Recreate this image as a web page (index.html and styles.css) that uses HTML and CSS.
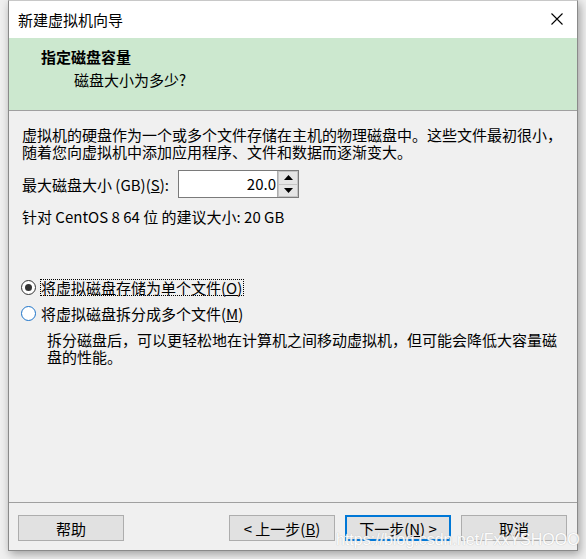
FILE: index.html
```html
<!DOCTYPE html>
<html lang="zh-CN">
<head>
<meta charset="utf-8">
<title>新建虚拟机向导</title>
<link rel="stylesheet" href="styles.css">
</head>
<body>
<div class="window">
  <div class="titlebar">
    <span class="title">新建虚拟机向导</span>
    <svg class="close" width="12" height="12" viewBox="0 0 12 12"><path d="M0.5 0.5 L11.5 11.5 M11.5 0.5 L0.5 11.5" stroke="#000" stroke-width="1.1" fill="none"/></svg>
  </div>
  <div class="header">
    <div class="h-title">指定磁盘容量</div>
    <div class="h-sub">磁盘大小为多少?</div>
  </div>
  <div class="content">
    <p class="para">虚拟机的硬盘作为一个或多个文件存储在主机的物理磁盘中。这些文件最初很小，<br>随着您向虚拟机中添加应用程序、文件和数据而逐渐变大。</p>
    <div class="size-row">
      <span class="label">最大磁盘大小 (GB)(<u>S</u>):</span>
      <div class="spinner">
        <div class="spin-value">20.0</div>
        <div class="spin-btns">
          <div class="spin-btn"><svg width="9" height="5" viewBox="0 0 9 5"><path d="M0 5 L4.5 0 L9 5 Z" fill="#000"/></svg></div>
          <div class="spin-btn"><svg width="9" height="5" viewBox="0 0 9 5"><path d="M0 0 L4.5 5 L9 0 Z" fill="#000"/></svg></div>
        </div>
      </div>
    </div>
    <div class="recommend">针对 CentOS 8 64 位 的建议大小: 20 GB</div>
    <div class="radio-row first">
      <span class="radio checked"></span>
      <span class="radio-label focused">将虚拟磁盘存储为单个文件(<u>O</u>)</span>
    </div>
    <div class="radio-row second">
      <span class="radio hover"></span>
      <span class="radio-label">将虚拟磁盘拆分成多个文件(<u>M</u>)</span>
    </div>
    <p class="desc">拆分磁盘后，可以更轻松地在计算机之间移动虚拟机，但可能会降低大容量磁<br>盘的性能。</p>
  </div>
  <div class="footer">
    <button class="btn">帮助</button>
    <div class="spacer"></div>
    <button class="btn">&lt; 上一步(<u>B</u>)</button>
    <button class="btn default">下一步(<u>N</u>) &gt;</button>
    <button class="btn">取消</button>
    <span class="watermark">https://blog.csdn.net/FxxYSHOOO</span>
  </div>
</div>
</body>
</html>
```

FILE: styles.css
```css
html, body {
  margin: 0;
  padding: 0;
}
body {
  background: #f0f0f0;
  font-family: "Noto Sans CJK SC", "Noto Sans", sans-serif;
  font-size: 15px;
  color: #000;
  width: 586px;
  height: 559px;
  overflow: hidden;
}
.window {
  position: relative;
  margin-left: 8px;
  width: 568px;
  height: 549px;
  border: 1px solid #8a8a8a;
  border-top-color: #c8c8c8;
  background: #f0f0f0;
  display: flex;
  flex-direction: column;
  box-shadow: 2px 3px 9px rgba(0, 0, 0, 0.35);
}
.titlebar {
  height: 37px;
  background: #fff;
  display: flex;
  align-items: center;
  padding-left: 9px;
  padding-right: 14px;
  flex: none;
}
.title {
  flex: 1;
  line-height: 17px;
}
.close {
  display: block;
  margin-top: -1px;
}
.header {
  height: 72px;
  background: #cce8cf;
  border-bottom: 1px solid #a0a0a0;
  box-sizing: content-box;
  padding-left: 32px;
  flex: none;
}
.h-title {
  font-weight: bold;
  line-height: 18px;
  margin-top: 10px;
}
.h-sub {
  line-height: 18px;
  margin-top: 5px;
  padding-left: 33px;
}
.content {
  flex: 1;
  padding-left: 13px;
  padding-top: 15px;
}
.para {
  margin: 0;
  line-height: 17px;
}
.size-row {
  display: flex;
  align-items: center;
  margin-top: 10px;
  height: 28px;
}
.label {
  width: 156px;
  line-height: 17px;
}
.spinner {
  display: flex;
  width: 119px;
  height: 26px;
  border: 1px solid #7a7a7a;
  background: #fff;
}
.spin-value {
  flex: 1;
  text-align: right;
  line-height: 26px;
  padding-right: 1px;
}
.spin-btns {
  width: 20px;
  display: flex;
  flex-direction: column;
  border-left: 1px solid #adadad;
}
.spin-btn {
  flex: 1;
  background: #e5e5e5;
  border: 1px solid #c4c4c4;
  display: flex;
  align-items: center;
  justify-content: center;
}
.spin-btn + .spin-btn {
  border-top: none;
}
.recommend {
  margin-top: 10px;
  line-height: 17px;
}
.radio-row {
  display: flex;
  align-items: center;
  height: 17px;
}
.radio-row.first {
  margin-top: 54px;
}
.radio-row.second {
  margin-top: 9px;
}
.radio {
  width: 13px;
  height: 13px;
  border: 1px solid #333;
  border-radius: 50%;
  background: #fff;
  margin-left: -1px;
  margin-right: 4px;
  position: relative;
  flex: none;
}
.radio.hover {
  border-color: #1c73c9;
}
.radio.checked::after {
  content: "";
  position: absolute;
  left: 3px;
  top: 3px;
  width: 7px;
  height: 7px;
  border-radius: 50%;
  background: #333;
}
.radio-label {
  line-height: 15px;
  border: 1px dotted transparent;
  padding: 0 1px 0 0;
}
.radio-label.focused {
  border-color: #000;
}
.desc {
  margin: 9px 0 0 0;
  padding-left: 25px;
  line-height: 17px;
}
.footer {
  position: relative;
  flex: none;
  height: 35px;
  border-top: 1px solid #a0a0a0;
  padding: 12px 10px 0 9px;
  display: flex;
  align-items: flex-start;
  gap: 10px;
}
.spacer {
  flex: 1;
}
.btn {
  width: 106px;
  height: 26px;
  background: #e1e1e1;
  border: 1px solid #adadad;
  font-family: inherit;
  font-size: 15px;
  line-height: 17px;
  color: #000;
  padding: 0;
  margin: 0;
}
.btn.default {
  border: 2px solid #0078d7;
}
.watermark {
  position: absolute;
  left: 327px;
  top: 28px;
  font-family: "Liberation Sans", Arial, sans-serif;
  font-size: 16px;
  line-height: 18px;
  color: #ffffff;
  text-shadow: 0 0 1px #c4c4c4, 0 0 1px #c4c4c4;
  white-space: nowrap;
  opacity: 0.9;
}
```
